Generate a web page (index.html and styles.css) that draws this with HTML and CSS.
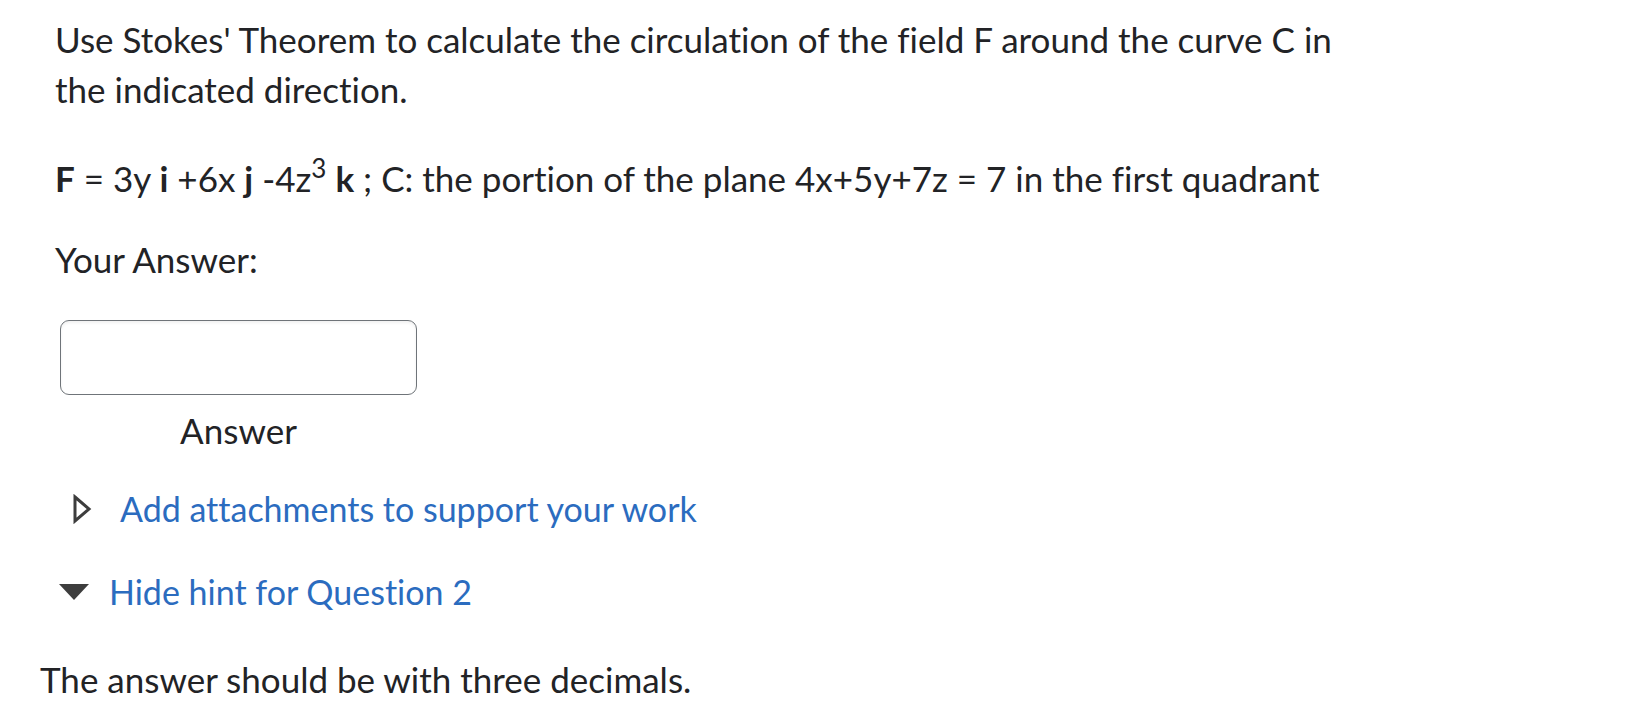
FILE: index.html
```html
<!DOCTYPE html>
<html>
<head>
<meta charset="utf-8">
<link rel="stylesheet" href="styles.css">
</head>
<body>
<div class="question">
  <p class="text wide">Use Stokes' Theorem to calculate the circulation of the field F around the curve C in the indicated direction.</p>
  <p class="text formula"><b>F</b> = 3y <b>i</b> +6x <b>j</b> -4z<sup>3</sup> <b>k</b> ; C: the portion of the plane 4x+5y+7z = 7 in the first quadrant</p>
  <p class="text label">Your Answer:</p>
  <div class="answer">
    <input class="answer-input" type="text" aria-label="Answer">
    <div class="answer-caption">Answer</div>
  </div>
  <div class="toggle attach">
    <svg class="tri-right" width="20" height="30" viewBox="0 0 20 30"><path d="M3 3 L17 15 L3 27 Z" fill="none" stroke="#3d3d3d" stroke-width="3" stroke-linejoin="miter"/></svg>
    <a class="link" href="#">Add attachments to support your work</a>
  </div>
  <div class="toggle hint">
    <svg class="tri-down" width="32" height="18" viewBox="0 0 32 18"><path d="M1 1 L31 1 L16 17 Z" fill="#3d3d3d"/></svg>
    <a class="link" href="#">Hide hint for Question 2</a>
  </div>
</div>
<p class="hint-text">The answer should be with three decimals.</p>
</body>
</html>
```
FILE: styles.css
```css
html, body {
  margin: 0;
  padding: 0;
  background: #ffffff;
}
body {
  font-family: Lato, "Open Sans", "Liberation Sans", sans-serif;
  font-variant-ligatures: none;
  color: #222326;
  width: 1650px;
  height: 716px;
  overflow: hidden;
}
.question {
  padding: 14px 0 0 55px;
}
.text {
  margin: 0;
  font-size: 35px;
  line-height: 50px;
}
.wide {
  width: 1300px;
}
.formula {
  margin-top: 39px;
}
.formula b {
  font-weight: 700;
}
.formula sup {
  font-size: 26px;
  line-height: 0;
  vertical-align: 14px;
}
.label {
  margin-top: 31px;
}
.answer {
  margin-top: 36px;
  margin-left: 5px;
  width: 357px;
  display: flex;
  flex-direction: column;
  align-items: center;
}
.answer-input {
  box-sizing: border-box;
  width: 357px;
  height: 75px;
  border: 1.5px solid #6f7479;
  border-radius: 9px;
  box-shadow: inset 0 2px 3px rgba(0,0,0,0.06);
  background: #fff;
  margin: 0;
  outline: none;
}
.answer-caption {
  font-size: 35px;
  line-height: 40px;
  margin-top: 15px;
}
.toggle {
  display: flex;
  align-items: center;
  font-size: 34px;
  line-height: 40px;
}
.attach {
  margin-top: 39px;
  padding-left: 17px;
  gap: 28px;
}
.hint {
  margin-top: 43px;
  padding-left: 3px;
  gap: 19px;
}
.link {
  color: #2b6cbf;
  text-decoration: none;
}
.hint-text {
  margin: 47px 0 0 40px;
  font-size: 35px;
  line-height: 40px;
}
```
